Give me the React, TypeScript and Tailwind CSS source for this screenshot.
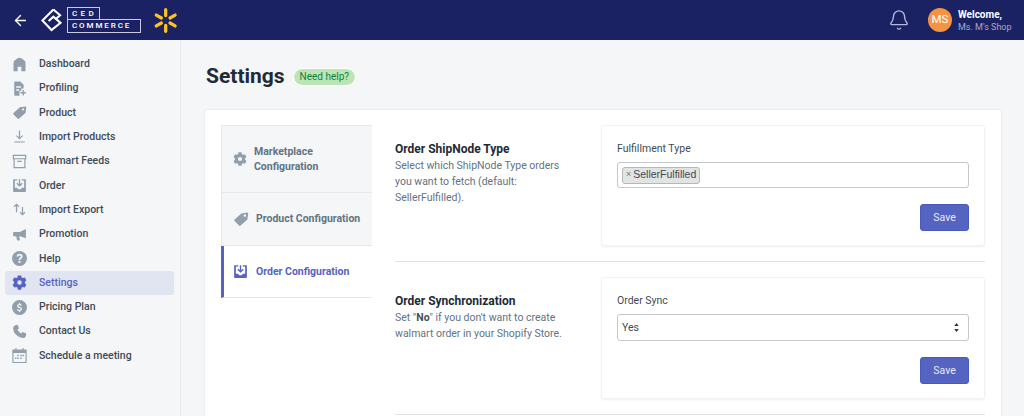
import { ArrowLeft, Bell } from "lucide-react";
import type { ReactNode } from "react";

const icons: Record<string, ReactNode> = {
  home: <path d="M10 1 Q8.5 1 7 2 L3.5 4.5 Q2 5.6 2 7.5 V19 H7.5 V13 H12.5 V19 H18 V7.5 Q18 5.6 16.5 4.5 L13 2 Q11.5 1 10 1 Z" />,
  profile: (
    <path fillRule="evenodd" d="M4 0.5 H11 L15.5 5 V10 H12.5 V13 H10 V19.5 H4 Q3 19.5 3 18.5 V1.5 Q3 0.5 4 0.5 Z M5.5 7 V9 H12 V7 Z M5.5 11 V13 H9.5 V11 Z M14 12 H15.8 V14.7 H18.5 V16.5 H15.8 V19.2 H14 V16.5 H11.3 V14.7 H14 Z" />
  ),
  tag: (
    <path fillRule="evenodd" d="M10.5 3 L18 2 Q19.2 2 19 3.2 L18 10.5 L9.5 18 Q8.5 19 7.5 18 L2 12.5 Q1 11.5 2 10.5 Z M14.8 4.2 A1.5 1.5 0 1 0 14.81 4.2 Z" />
  ),
  importIcon: <path d="M9.2 2 H10.8 V11 L13.5 8.3 L14.6 9.4 L10 14 L5.4 9.4 L6.5 8.3 L9.2 11 Z M3 16.6 H17 V18 H3 Z" />,
  archive: (
    <path fillRule="evenodd" d="M1 1 H19 V7 H18 V19 H2 V7 H1 Z M2.6 2.6 V5.6 H17.4 V2.6 Z M3.6 7 V17.4 H16.4 V7 Z M7 9 H13 V10.5 H7 Z" />
  ),
  order: (
    <path fillRule="evenodd" d="M2.5 1.5 H7 V3.2 H3.8 V13 H7 L8 15 H12 L13 13 H16.2 V3.2 H13 V1.5 H17.5 Q18.5 1.5 18.5 2.5 V17.5 Q18.5 18.5 17.5 18.5 H2.5 Q1.5 18.5 1.5 17.5 V2.5 Q1.5 1.5 2.5 1.5 Z M9.1 1.5 H10.9 V8.3 L13 6.2 L14.3 7.5 L10 11.8 L5.7 7.5 L7 6.2 L9.1 8.3 Z" />
  ),
  swap: <path d="M6 2 L9.8 5.8 L8.7 6.9 L6.8 5 V13.5 H5.2 V5 L3.3 6.9 L2.2 5.8 Z M13.2 6.5 H14.8 V15 L16.7 13.1 L17.8 14.2 L14 18 L10.2 14.2 L11.3 13.1 L13.2 15 Z" />,
  promo: <path d="M18.5 2.5 V15 L10.5 12.2 H9.5 L10.5 17 Q10.5 18 9.5 18 H7.5 Q6.8 18 6.6 17 L5.6 12.2 H2.5 Q1.5 12.2 1.5 11.2 V7.5 Q1.5 6.5 2.5 6.5 H10.5 Z" />,
  help: (
    <path fillRule="evenodd" d="M10 0 A10 10 0 1 0 10 20 A10 10 0 1 0 10 0 Z M10 3.8 Q14.2 3.8 14.2 7.3 Q14.2 9.4 12.2 10.4 Q11.2 11 11.2 12 H8.8 Q8.8 9.9 10.4 8.9 Q11.8 8.2 11.8 7.4 Q11.8 6 10 6 Q8.5 6 8.1 7.5 L6 7 Q6.7 3.8 10 3.8 Z M10 13 A1.5 1.5 0 1 0 10 16 A1.5 1.5 0 1 0 10 13 Z" />
  ),
  gear: (
    <path fillRule="evenodd" d="M7.8 0.5 H12.2 L12.8 3.2 L14.4 4.1 L17 3.3 L19.2 7.1 L17.2 9 V11 L19.2 12.9 L17 16.7 L14.4 15.9 L12.8 16.8 L12.2 19.5 H7.8 L7.2 16.8 L5.6 15.9 L3 16.7 L0.8 12.9 L2.8 11 V9 L0.8 7.1 L3 3.3 L5.6 4.1 L7.2 3.2 Z M10 7 A3 3 0 1 0 10 13 A3 3 0 1 0 10 7 Z" />
  ),
  dollar: (
    <path fillRule="evenodd" d="M10 0 A10 10 0 1 0 10 20 A10 10 0 1 0 10 0 Z M9.2 4 H10.8 V5.2 Q12.8 5.5 13.2 7.4 L11.6 7.8 Q11.3 6.8 10 6.8 Q8.5 6.8 8.5 7.8 Q8.5 8.6 10.2 9 Q13.4 9.6 13.4 12 Q13.4 14.2 10.8 14.7 V16 H9.2 V14.7 Q7 14.4 6.6 12.4 L8.2 12 Q8.6 13.2 10 13.2 Q11.7 13.2 11.7 12.1 Q11.7 11.2 9.8 10.8 Q6.8 10.2 6.8 7.9 Q6.8 5.7 9.2 5.2 Z" />
  ),
  phone: <path d="M4.5 1.5 L7.5 1 L9.3 5.8 L7.3 7.6 Q9 11 12.4 12.7 L14.2 10.7 L19 12.5 L18.5 15.5 Q18 18.8 14.5 18.5 Q8.5 18 5 14 Q1.5 10 1.5 5.5 Q1.5 2.2 4.5 1.5 Z" />,
  calendar: (
    <path fillRule="evenodd" d="M4.5 0 H6 V2 H14 V0 H15.5 V2 H19.5 V20 H0.5 V2 H4.5 Z M2 6.5 V18.5 H18 V6.5 Z M7 9 H9 V11 H7 Z M11 9 H13 V11 H11 Z M14 9 H16 V11 H14 Z M7 12.5 H9 V14.5 H7 Z M11 12.5 H13 V14.5 H11 Z M4 12.5 H6 V14.5 H4 Z" />
  ),
};

function Icon({ name, className }: { name: string; className?: string }) {
  return (
    <svg viewBox="0 0 20 20" fill="currentColor" className={className}>
      {icons[name]}
    </svg>
  );
}

const navItems = [
  { label: "Dashboard", icon: "home" },
  { label: "Profiling", icon: "profile" },
  { label: "Product", icon: "tag" },
  { label: "Import Products", icon: "importIcon" },
  { label: "Walmart Feeds", icon: "archive" },
  { label: "Order", icon: "order" },
  { label: "Import Export", icon: "swap" },
  { label: "Promotion", icon: "promo" },
  { label: "Help", icon: "help" },
  { label: "Settings", icon: "gear", active: true },
  { label: "Pricing Plan", icon: "dollar" },
  { label: "Contact Us", icon: "phone" },
  { label: "Schedule a meeting", icon: "calendar" },
];

function Logo() {
  return (
    <div className="flex items-center">
      <svg viewBox="0 0 22 26" className="w-[21px] h-[25px] text-white" fill="none" stroke="currentColor" strokeWidth="2.2">
        <path d="M13 1.5 L1.5 13 L11 23 L20.5 15.5 L13 9 L8 13.5 M13 1.5 L20 7.5 L15.5 11.5" />
      </svg>
      <div className="ml-[5px] relative w-[74px] h-[26px]">
        <div className="absolute left-0 top-0 w-[33px] h-[13px] border border-[#c9cbe0] pl-[4px] text-[8px] leading-[11px] tracking-[3.4px] text-white font-medium">
          CED
        </div>
        <div className="absolute left-0 top-[12px] w-[74px] h-[14px] border border-[#c9cbe0] pl-[4px] text-[8px] leading-[12px] tracking-[1.9px] text-white font-medium">
          COMMERCE
        </div>
      </div>
    </div>
  );
}

function Spark() {
  return (
    <svg viewBox="0 0 26 28" className="ml-[12px] w-[25px] h-[27px]" fill="#ffc220">
      <rect x="11.5" y="1" width="3.4" height="9.5" rx="1.7" />
      <rect x="11.5" y="17.5" width="3.4" height="9.5" rx="1.7" />
      <rect x="11.5" y="1" width="3.4" height="9.5" rx="1.7" transform="rotate(60 13.2 14)" />
      <rect x="11.5" y="1" width="3.4" height="9.5" rx="1.7" transform="rotate(120 13.2 14)" />
      <rect x="11.5" y="1" width="3.4" height="9.5" rx="1.7" transform="rotate(240 13.2 14)" />
      <rect x="11.5" y="1" width="3.4" height="9.5" rx="1.7" transform="rotate(300 13.2 14)" />
    </svg>
  );
}

function Section({ title, children, card, tall }: { title: string; children: ReactNode; card: ReactNode; tall?: boolean }) {
  return (
    <div className="flex pb-[15px] mb-[15px] border-b border-[#dfe3e8]">
      <div className="w-[206px] shrink-0 pr-[20px]">
        <h3 className="text-[12px] leading-[16px] font-bold text-[#212b36] mt-[16px]">{title}</h3>
        <p className="text-[10.5px] leading-[16px] text-[#637381] mt-[1px]">{children}</p>
      </div>
      <div className={`flex-1 ${tall ? "h-[122px]" : "h-[121px]"} bg-white rounded-[3px] border border-[#f1f2f4] shadow-[0_1px_2px_rgba(63,63,68,0.08)] px-[15px] pt-[15px]`}>
        {card}
      </div>
    </div>
  );
}

function SaveButton() {
  return (
    <div className="flex justify-end mt-[16px]">
      <button className="w-[49px] h-[27px] rounded-[3px] bg-[#5563c1] border border-[#4959bd] text-[10.5px] text-[#e8eaf8] font-['Roboto',sans-serif]">
        Save
      </button>
    </div>
  );
}

export default function App() {
  return (
    <div className="w-[1024px] h-[416px] overflow-hidden flex flex-col bg-[#f4f6f8] font-['Roboto',sans-serif]">
      <header className="h-[40px] shrink-0 bg-[#1a2263] flex items-center">
        <ArrowLeft className="ml-[12px] w-[17px] h-[17px] text-white" strokeWidth={1.9} />
        <div className="ml-[12px] flex items-center">
          <Logo />
          <Spark />
        </div>
        <div className="ml-auto flex items-center">
          <Bell className="w-[22px] h-[24px] text-[#b5b9dc]" strokeWidth={1.5} />
          <div className="ml-[18px] w-[24px] h-[24px] rounded-full bg-[#f49342] flex items-center justify-center text-[11.5px] text-white">
            MS
          </div>
          <div className="ml-[6px] w-[66px] leading-none">
            <div className="text-[10px] leading-[13px] font-bold text-white">Welcome,</div>
            <div className="text-[9px] leading-[12px] text-[#a3a8cd]">Ms. M's Shop</div>
          </div>
        </div>
      </header>

      <div className="flex flex-1 min-h-0">
        <aside className="w-[181px] shrink-0 border-r border-[#e9ebee] pt-[11.9px] px-[5px]">
          {navItems.map((item) => (
            <div
              key={item.label}
              className={`h-[24.3px] w-[169px] flex items-center pl-[7px] rounded-[3px] ${item.active ? "bg-[#e1e5f1]" : ""}`}
            >
              <Icon name={item.icon} className={`w-[15px] h-[15px] ${item.active ? "text-[#5563c1]" : "text-[#919eab]"}`} />
              <span className={`ml-[12px] text-[10.5px] font-medium ${item.active ? "text-[#5563c1]" : "text-[#3f4a56]"}`}>
                {item.label}
              </span>
            </div>
          ))}
        </aside>

        <main className="flex-1 min-w-0 pl-[24px] pr-[23px]">
          <div className="flex items-center h-[70px] pl-[1px]">
            <h1 className="text-[21px] font-bold text-[#212b36] leading-[28px] mt-[1px]">Settings</h1>
            <span className="ml-[9px] mt-[4px] px-[6px] h-[16px] leading-[15px] rounded-full bg-[#bbe5b3] outline outline-1 outline-white text-[10px] text-[#108043]">
              Need help?
            </span>
          </div>

          <div className="bg-white rounded-[3px] shadow-[0_0_2px_rgba(63,63,68,0.15)] pt-[15px] pl-[16px] pr-[16px] flex">
            <div className="w-[151px] shrink-0">
              <div className="h-[68px] bg-[#f4f6f8] border-b border-l border-t border-[#e6e9ec] flex items-center pl-[11px]">
                <Icon name="gear" className="w-[14px] h-[14px] text-[#919eab]" />
                <span className="ml-[7px] text-[10.5px] leading-[15px] font-bold text-[#637381]">
                  Marketplace
                  <br />
                  Configuration
                </span>
              </div>
              <div className="h-[53px] bg-[#f4f6f8] border-b border-l border-[#e6e9ec] flex items-center pl-[11px]">
                <Icon name="tag" className="w-[16px] h-[16px] text-[#919eab]" />
                <span className="ml-[7px] text-[10.5px] font-bold text-[#637381] whitespace-nowrap">Product Configuration</span>
              </div>
              <div className="h-[52px] bg-white border-b border-[#e6e9ec] border-l-[3px] border-l-[#5563c1] flex items-center pl-[9px]">
                <Icon name="order" className="w-[15px] h-[15px] text-[#5563c1]" />
                <span className="ml-[8px] text-[10.5px] font-bold text-[#5563c1] whitespace-nowrap">Order Configuration</span>
              </div>
            </div>

            <div className="flex-1 min-w-0 pl-[23px]">
              <Section
                title="Order ShipNode Type"
                card={
                  <>
                    <label className="block text-[10.5px] leading-[16px] text-[#3f4a56]">Fulfillment Type</label>
                    <div className="mt-[5px] h-[26px] rounded-[3px] border border-[#c4c8cc] flex items-center pl-[4px]">
                      <span className="h-[17px] rounded-[3px] border border-[#b5b8bb] bg-[#e2e3e4] px-[3px] flex items-center text-[10.5px] text-[#3f4a56] font-['Liberation_Sans',sans-serif]">
                        <span className="text-[#777] text-[9px] mr-[2px]">×</span>SellerFulfilled
                      </span>
                    </div>
                    <SaveButton />
                  </>
                }
              >
                Select which ShipNode Type orders
                <br />
                you want to fetch (default:
                <br />
                SellerFulfilled).
              </Section>
              <Section
                tall
                title="Order Synchronization"
                card={
                  <>
                    <label className="block text-[10.5px] leading-[16px] text-[#3f4a56]">Order Sync</label>
                    <div className="mt-[5px] h-[27px] rounded-[3px] border border-[#c4c8cc] flex items-center justify-between pl-[4px] pr-[9px] text-[10.5px] text-[#3f4a56]">
                      <span>Yes</span>
                      <svg viewBox="0 0 6 12" className="w-[5px] h-[9px]" fill="#333">
                        <path d="M3 0 L6 4 H0 Z M3 12 L0 8 H6 Z" />
                      </svg>
                    </div>
                    <SaveButton />
                  </>
                }
              >
                Set "<b className="text-[#454f5b]">No</b>" if you don't want to create
                <br />
                walmart order in your Shopify Store.
              </Section>
            </div>
          </div>
        </main>
      </div>
    </div>
  );
}
